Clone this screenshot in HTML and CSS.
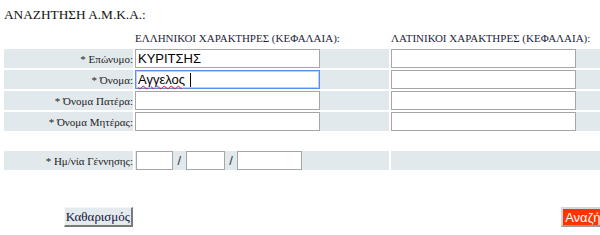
FILE: index.html
```html
<!DOCTYPE html>
<html lang="el">
<head>
<meta charset="utf-8">
<title>ΑΝΑΖΗΤΗΣΗ Α.Μ.Κ.Α.</title>
<link rel="stylesheet" href="styles.css">
</head>
<body>
<div class="title">ΑΝΑΖΗΤΗΣΗ Α.Μ.Κ.Α.:</div>
<table class="form">
  <colgroup>
    <col class="c-label">
    <col class="c-gr">
    <col class="c-lat">
  </colgroup>
  <tr class="head">
    <td></td>
    <td>ΕΛΛΗΝΙΚΟΙ ΧΑΡΑΚΤΗΡΕΣ (ΚΕΦΑΛΑΙΑ):</td>
    <td>ΛΑΤΙΝΙΚΟΙ ΧΑΡΑΚΤΗΡΕΣ (ΚΕΦΑΛΑΙΑ):</td>
  </tr>
  <tr class="field">
    <td class="label">* Επώνυμο:</td>
    <td><input class="txt" type="text" value="ΚΥΡΙΤΣΗΣ"></td>
    <td><input class="txt" type="text"></td>
  </tr>
  <tr class="field">
    <td class="label">* Όνομα:</td>
    <td><span class="focus-wrap"><input class="txt focused" type="text" value="Αγγελος"><span class="squiggle" aria-hidden="true">Αγγελος</span></span></td>
    <td><input class="txt" type="text"></td>
  </tr>
  <tr class="field">
    <td class="label">* Όνομα Πατέρα:</td>
    <td><input class="txt" type="text"></td>
    <td><input class="txt" type="text"></td>
  </tr>
  <tr class="field">
    <td class="label">* Όνομα Μητέρας:</td>
    <td><input class="txt" type="text"></td>
    <td><input class="txt" type="text"></td>
  </tr>
  <tr class="blank"><td></td><td></td><td></td></tr>
  <tr class="field">
    <td class="label">* Ημ/νία Γέννησης:</td>
    <td>
      <div class="date">
        <input class="txt day" type="text">
        <span class="sep">/</span>
        <input class="txt month" type="text">
        <span class="sep">/</span>
        <input class="txt year" type="text">
      </div>
    </td>
    <td></td>
  </tr>
  <tr class="spacer"><td></td><td></td><td></td></tr>
  <tr class="actions">
    <td class="label"><button class="btn-clear" type="reset">Καθαρισμός</button></td>
    <td></td>
    <td class="right"><button class="btn-search" type="submit">Αναζήτηση</button></td>
  </tr>
</table>
</body>
</html>
```
FILE: styles.css
```css
html, body {
  margin: 0;
  padding: 0;
  background: #ffffff;
  overflow: hidden;
}

body {
  font-family: "Liberation Serif", "Times New Roman", serif;
  color: #222233;
  width: 640px;
}

.title {
  font-size: 13.3px;
  line-height: 15px;
  padding: 7px 0 0 4px;
  color: #111;
}

.form {
  border-collapse: separate;
  border-spacing: 2px;
  margin: 5px 0 0 2px;
  table-layout: fixed;
  width: 632px;
}

.c-label { width: 129px; }
.c-gr { width: 254px; }
.c-lat { width: 241px; }

.form td {
  padding: 0;
  font-size: 11px;
  vertical-align: middle;
  white-space: nowrap;
}

.head td {
  height: 18px;
  color: #1e1e3a;
}

.field td {
  height: 19px;
  background: #e2e9ed;
}

.label {
  text-align: right;
  color: #222;
}

.blank td { height: 16px; }
.spacer td { height: 33px; }
.actions td { height: 20px; }
.actions .right { text-align: right; }

.txt {
  box-sizing: border-box;
  display: block;
  width: 185px;
  height: 19px;
  margin: 0;
  padding: 0 2px;
  border: 1px solid #a6a6a6;
  background: #fff;
  font-family: "Liberation Sans", Arial, sans-serif;
  font-size: 13px;
  color: #000;
  outline: none;
}

.focus-wrap {
  position: relative;
  display: block;
  width: 185px;
}

.focus-wrap::after {
  content: "";
  position: absolute;
  left: 55px;
  top: 3px;
  width: 1px;
  height: 14px;
  background: #000;
}

.squiggle {
  position: absolute;
  left: 3px;
  top: 1px;
  font-family: "Liberation Sans", Arial, sans-serif;
  font-size: 13px;
  line-height: 17px;
  color: transparent;
  text-decoration: underline wavy #e02020;
  text-decoration-thickness: 1px;
  text-underline-offset: 1px;
  pointer-events: none;
}

.txt.focused {
  border: 1px solid #5a8fe3;
  box-shadow: inset 0 0 0 1px #b9d0f4;
}

.date {
  display: flex;
  align-items: center;
  gap: 4.5px;
  padding-left: 1px;
}

.date .day { width: 37px; }
.date .month { width: 39px; }
.date .year { width: 65px; }

.sep {
  font-family: "Liberation Sans", Arial, sans-serif;
  font-size: 13px;
  color: #333;
}

.btn-clear {
  height: 20px;
  margin: 0;
  padding: 0 1px;
  font-family: "Liberation Serif", "Times New Roman", serif;
  font-size: 13px;
  color: #121238;
  background: #e4ebef;
  border-style: solid;
  border-width: 1px 2px 2px 1px;
  border-color: #f4f6f8 #7a7a7a #7a7a7a #f4f6f8;
}

.btn-search {
  height: 20px;
  margin: 0;
  padding: 0 2px;
  font-family: "Liberation Sans", Arial, sans-serif;
  font-size: 13px;
  color: #fff;
  background: #ff3300;
  border: 2px solid;
  border-color: #d6d6d6 #9a9a9a #9a9a9a #d6d6d6;
}
```
